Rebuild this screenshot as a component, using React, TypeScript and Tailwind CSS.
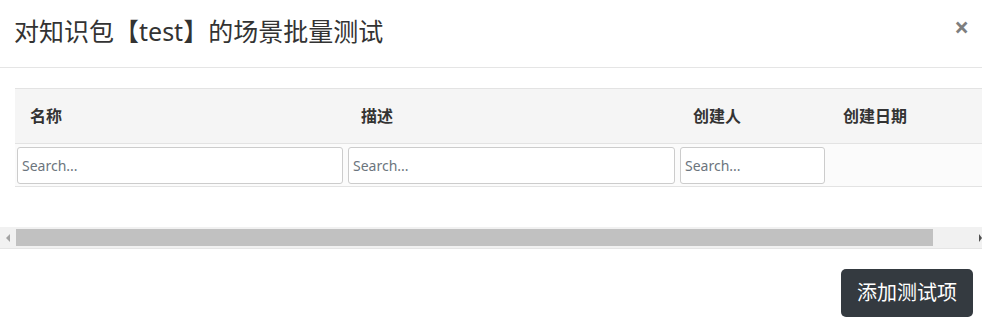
import React from "react"

const COLUMNS = [
  { title: "名称", width: "w-[331px]", input: "w-[326px]" },
  { title: "描述", width: "w-[332px]", input: "w-[327px]" },
  { title: "创建人", width: "w-[150px]", input: "w-[145px]" },
  { title: "创建日期", width: "w-[300px]", input: "" },
]

export default function App() {
  return (
    <div className="w-[982px] h-[335px] overflow-hidden bg-white text-[#212529] font-['Noto_Sans','Noto_Sans_CJK_SC',sans-serif]">
      {/* Header */}
      <div className="flex justify-between items-start h-[68px] border-b border-[#e5e5e5] pl-[14px] pr-[13px] pt-[13px]">
        <h4 className="text-[25px] leading-[36px] font-normal text-[#333]">对知识包【test】的场景批量测试</h4>
        <button className="text-[26px] leading-[28px] font-bold text-black opacity-50">×</button>
      </div>

      {/* Body */}
      <div className="pt-[20px]">
        <div className="ml-[15px] overflow-hidden">
          <div className="w-[1114px]">
            <div className="flex h-[56px] bg-[#f5f5f5] border-y border-[#e3e3e3]">
              {COLUMNS.map((col) => (
                <div key={col.title} className={`${col.width} shrink-0 flex items-center pl-[15px] text-[16px] font-bold text-[#333]`}>
                  {col.title}
                </div>
              ))}
            </div>
            <div className="flex h-[43px] bg-[#fbfbfb] border-b border-[#e3e3e3]">
              {COLUMNS.map((col) => (
                <div key={col.title} className={`${col.width} shrink-0 flex items-center pl-[2px]`}>
                  {col.input && (
                    <input
                      placeholder="Search..."
                      className={`${col.input} h-[37px] bg-white border border-[#ccc] rounded-[3px] px-[4px] text-[14px] text-[#555] placeholder:text-[#6c757d] outline-none`}
                    />
                  )}
                </div>
              ))}
            </div>
          </div>
        </div>

        {/* Horizontal scrollbar */}
        <div className="mt-[40px] h-[21px] bg-[#f1f1f1] flex items-center">
          <div className="w-[16px] h-full flex items-center justify-center">
            <div className="w-0 h-0 border-y-[4px] border-y-transparent border-r-[4px] border-r-[#a3a3a3]" />
          </div>
          <div className="w-[917px] h-[17px] bg-[#c1c1c1]" />
          <div className="flex-1" />
          <div className="w-[4px] h-full flex items-center justify-end">
            <div className="w-0 h-0 border-y-[4px] border-y-transparent border-l-[3px] border-l-[#505050]" />
          </div>
        </div>
      </div>

      {/* Footer */}
      <div className="border-t border-[#e5e5e5] flex justify-end pt-[20px] pr-[9px]">
        <button className="h-[48px] px-[16px] rounded-[5px] bg-[#343a40] text-white text-[20px] leading-[30px]">
          添加测试项
        </button>
      </div>
    </div>
  )
}
